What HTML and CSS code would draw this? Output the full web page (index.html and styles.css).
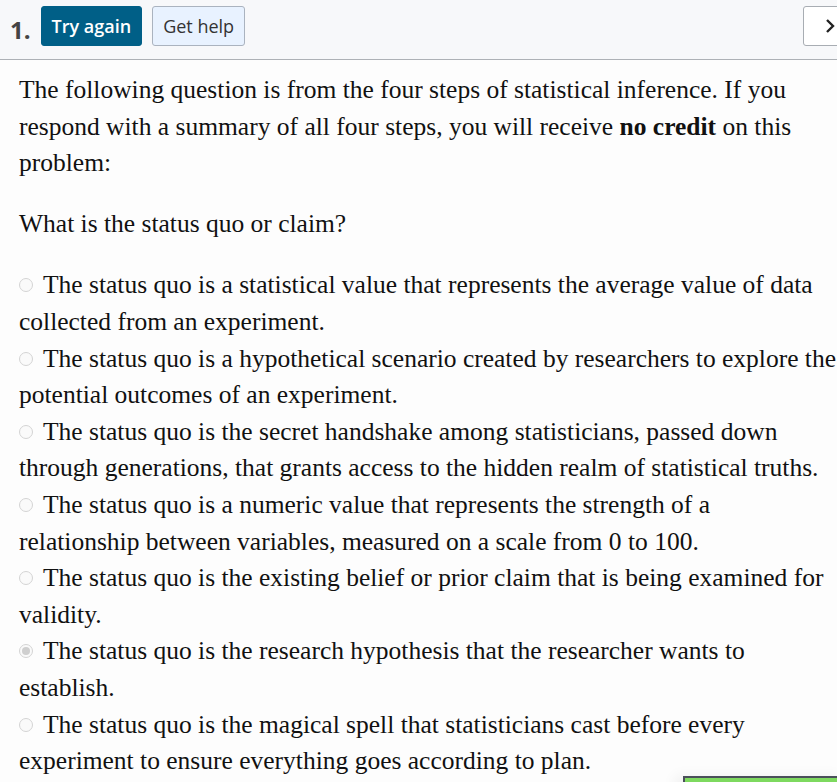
FILE: index.html
```html
<!DOCTYPE html>
<html>
<head>
<meta charset="utf-8">
<link rel="stylesheet" href="styles.css">
</head>
<body>
<div class="toolbar">
  <span class="qnum">1.</span>
  <button class="btn btn-primary">Try again</button>
  <button class="btn btn-help">Get help</button>
  <span class="spacer"></span>
  <button class="btn btn-next" aria-label="Next"><svg width="12" height="16" viewBox="0 0 12 16"><path d="M3 2 L9 8 L3 14" fill="none" stroke="#222" stroke-width="2.4"/></svg></button>
</div>
<div class="content">
  <p class="para">The following question is from the four steps of statistical inference. If you respond with a summary of all four steps, you will receive <b>no credit</b> on this problem:</p>
  <p class="para">What is the status quo or claim?</p>
  <div class="options">
    <div class="opt"><span class="radio"></span>The status quo is a statistical value that represents the average value of data collected from an experiment.</div>
    <div class="opt"><span class="radio"></span>The status quo is a hypothetical scenario created by researchers to explore the potential outcomes of an experiment.</div>
    <div class="opt"><span class="radio"></span>The status quo is the secret handshake among statisticians, passed down through generations, that grants access to the hidden realm of statistical truths.</div>
    <div class="opt"><span class="radio"></span>The status quo is a numeric value that represents the strength of a<br>relationship between variables, measured on a scale from 0 to 100.</div>
    <div class="opt"><span class="radio"></span>The status quo is the existing belief or prior claim that is being examined for validity.</div>
    <div class="opt"><span class="radio checked"></span>The status quo is the research hypothesis that the researcher wants to establish.</div>
    <div class="opt"><span class="radio"></span>The status quo is the magical spell that statisticians cast before every experiment to ensure everything goes according to plan.</div>
  </div>
</div>
<div class="greenbar"></div>
</body>
</html>
```
FILE: styles.css
```css
html, body {
  margin: 0;
  padding: 0;
  background: #fdfdfd;
  overflow: hidden;
}
body {
  width: 837px;
  height: 782px;
  position: relative;
}
.toolbar {
  display: flex;
  align-items: center;
  height: 60px;
  box-sizing: border-box;
  padding: 0 0 0 10px;
  background: #f7f8fa;
  border-bottom: 1px solid #adb1b6;
  gap: 10px;
  font-family: "Open Sans", "Noto Sans", sans-serif;
}
.qnum {
  font-size: 24px;
  font-weight: 700;
  color: #444;
  margin-right: 0;
}
.btn {
  height: 40px;
  box-sizing: border-box;
  border-radius: 3px;
  font-family: "Open Sans", "Noto Sans", sans-serif;
  font-size: 18px;
  padding: 0 10px;
  margin-top: -8px;
}
.btn-primary {
  background: #005f87;
  color: #fff;
  font-weight: 600;
  border: 1px solid #005f87;
}
.btn-help {
  background: #e8f2ff;
  color: #333;
  border: 1px solid #aab3bf;
  font-weight: 500;
}
.spacer { flex: 1; }
.btn-next {
  background: #fff;
  border: 1px solid #a8adb3;
  width: 50px;
  margin-right: -16px;
  display: flex;
  align-items: center;
  padding-left: 20px;
}
.content {
  padding: 12px 0 0 19px;
  font-family: "Liberation Serif", "Times New Roman", serif;
  font-size: 25.5px;
  line-height: 36.6px;
  color: #111;
}
.para {
  margin: 0 0 24.5px 0;
}
.radio {
  display: inline-block;
  width: 12px;
  height: 12px;
  border: 1.5px solid #d4d4d4;
  border-radius: 50%;
  background: #fafafa;
  margin: 0 10px 0 0;
  vertical-align: 1px;
  box-sizing: content-box;
  position: relative;
}
.radio.checked::after {
  content: "";
  position: absolute;
  left: 2px;
  top: 2px;
  width: 8px;
  height: 8px;
  border-radius: 50%;
  background: #cfcfcf;
}
.greenbar {
  position: absolute;
  left: 683px;
  top: 776px;
  width: 160px;
  height: 20px;
  background: #7ed95f;
  border: 2px solid #4a4f5a;
  box-shadow: -8px 0 14px rgba(0,0,0,0.06);
}
```
